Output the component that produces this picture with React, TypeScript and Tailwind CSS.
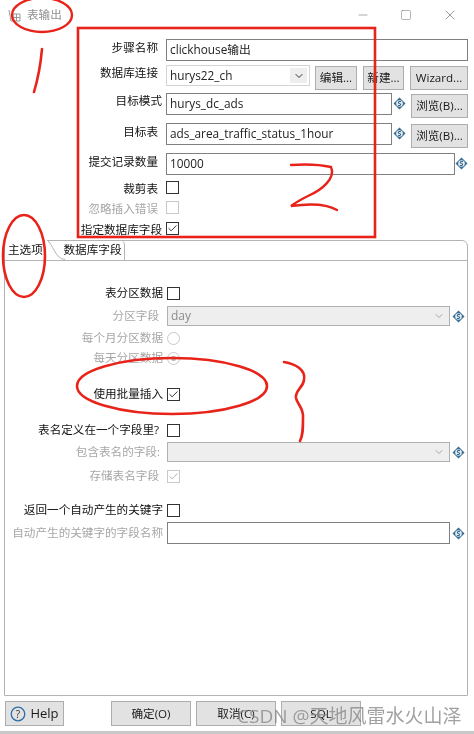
import { ReactNode } from "react";
import { ChevronDown, Minus, Square, X, Check } from "lucide-react";

function Dollar() {
  return (
    <svg width="13" height="13" viewBox="0 0 13 13" className="shrink-0">
      <path d="M6.5 0.5 L12.5 6.5 L6.5 12.5 L0.5 6.5 Z" fill="#3a6d93" />
      <circle cx="6.5" cy="6.5" r="3.3" fill="#e4ecf1" />
      <text x="6.5" y="9" textAnchor="middle" fontSize="7" fontWeight="700" fill="#2f6288">S</text>
    </svg>
  );
}

function CheckBox({ checked, disabled }: { checked?: boolean; disabled?: boolean }) {
  return (
    <span className={`w-[13px] h-[13px] shrink-0 border bg-white flex items-center justify-center ${disabled ? "border-[#c9c9c9]" : "border-[#333333]"}`}>
      {checked && <Check size={11} strokeWidth={2} className={disabled ? "text-[#a8a8a8]" : "text-[#222222]"} />}
    </span>
  );
}

function Radio({ dot }: { dot?: boolean }) {
  return (
    <span className="w-[13px] h-[13px] shrink-0 rounded-full border border-[#c9c9c9] bg-white flex items-center justify-center">
      {dot && <span className="w-[5px] h-[5px] rounded-full bg-[#b5b5b5]" />}
    </span>
  );
}

function Input({ value, className = "" }: { value?: string; className?: string }) {
  return (
    <div className={`h-[22px] border border-[#808080] bg-white px-[3px] flex items-center text-[#222222] text-[11.8px] whitespace-nowrap ${className}`}>
      {value}
    </div>
  );
}

function Btn({ children, className = "" }: { children: ReactNode; className?: string }) {
  return (
    <div className={`border border-[#adadad] bg-[#e2e2e2] flex items-center justify-center text-[#1a1a1a] text-[11.6px] whitespace-nowrap ${className}`}>
      {children}
    </div>
  );
}

function DisabledCombo({ value }: { value?: string }) {
  return (
    <div className="w-[283px] h-[20px] border border-[#b0b0b0] bg-[#eeeeee] pl-[3px] pr-[2px] flex items-center justify-between text-[#8c8c8c] text-[12px]">
      <span>{value}</span>
      <ChevronDown size={12} className="text-[#a8a8a8] mr-[2px]" />
    </div>
  );
}

function TopRow({ label, muted, children, className = "", labelClass = "pr-[5px]" }: { label: string; muted?: boolean; children: ReactNode; className?: string; labelClass?: string }) {
  return (
    <div className={`flex items-start ${className}`}>
      <span className={`w-[163px] shrink-0 text-right whitespace-nowrap leading-[16px] ${muted ? "text-[#a6a6a6]" : "text-[#111111]"} ${labelClass}`}>{label}</span>
      <div className="ml-[3px] flex items-start grow">{children}</div>
    </div>
  );
}

function PanelRow({ label, muted, children, top, labelClass = "" }: { label: string; muted?: boolean; children: ReactNode; top: string; labelClass?: string }) {
  return (
    <div className={`flex items-center ${top}`}>
      <span className={`w-[158px] shrink-0 text-right whitespace-nowrap ${muted ? "text-[#a6a6a6]" : "text-[#111111]"} ${labelClass}`}>{label}</span>
      <div className="ml-[4px] flex items-center gap-[1px]">{children}</div>
    </div>
  );
}

function Annotations() {
  return (
    <svg width="474" height="734" viewBox="0 0 474 734" fill="none" stroke="#e8231a" strokeLinecap="round" className="absolute left-0 top-0 pointer-events-none">
      <ellipse cx="42" cy="15" rx="30" ry="17" strokeWidth="2.4" />
      <path d="M42 49 C41 60 40 72 34 92" strokeWidth="2.6" />
      <rect x="78" y="28" width="297" height="209" strokeWidth="2.6" />
      <path d="M291 165 C305 164 322 165 331 167 C336 178 322 190 308 196 C300 200 295 203 291 206 C305 204 325 203 337 210" strokeWidth="2.4" />
      <ellipse cx="24" cy="256" rx="21" ry="41" strokeWidth="2.6" />
      <ellipse cx="172" cy="386" rx="95" ry="28" strokeWidth="2.6" />
      <path d="M284 362 C296 364 306 370 304 380 C303 388 295 390 296 398 C297 404 304 408 303 418 C303 428 303 436 300 441" strokeWidth="2.6" />
    </svg>
  );
}

export default function App() {
  return (
    <div className="relative w-[474px] h-[734px] overflow-hidden bg-white text-[11.6px] blur-[0.35px]" style={{ fontFamily: '"Open Sans", "Noto Sans CJK SC", sans-serif' }}>
      {/* title bar */}
      <div className="h-[30px] flex items-center pl-[8px] pr-[16px]">
        <svg width="13" height="13" viewBox="0 0 13 13" fill="none" stroke="#9a9a9a" strokeWidth="1" className="shrink-0">
          <path d="M1 1 L3 12 H12 V5 H5 V12 M5 8.5 H12 M8.5 5 V12" />
        </svg>
        <span className="ml-[6px] text-[#8f8f8f]">表输出</span>
        <div className="ml-auto flex items-center gap-[28px] text-[#6e6e6e]">
          <Minus size={14} strokeWidth={1} />
          <Square size={12} strokeWidth={1} className="mx-[2px]" />
          <X size={16} strokeWidth={1} />
        </div>
      </div>

      {/* general settings */}
      <div className="pt-[9px]">
        <TopRow label="步骤名称" labelClass="pr-[5px] pt-[1px]">
          <Input value="clickhouse输出" className="w-[302px]" />
        </TopRow>
        <TopRow label="数据库连接" className="mt-[4px]">
          <div className="w-[144px] h-[21px] border border-[#d4d4d4] bg-white pl-[3px] pr-[2px] flex items-center justify-between text-[11.8px] text-[#222222]">
            <span>hurys22_ch</span>
            <span className="w-[17px] h-[15px] bg-[#eeeeee] flex items-center justify-center">
              <ChevronDown size={12} className="text-[#333333]" />
            </span>
          </div>
          <Btn className="w-[42px] h-[24px] ml-[5px] mt-[1px]">编辑...</Btn>
          <Btn className="w-[41px] h-[24px] ml-[6px] mt-[1px]">新建...</Btn>
          <Btn className="w-[58px] h-[24px] ml-[6px] mt-[1px]">Wizard...</Btn>
        </TopRow>
        <TopRow label="目标模式" className="mt-[3px]" labelClass="pr-[1px]">
          <Input value="hurys_dc_ads" className="w-[226px]" />
          <span className="ml-[1px] mt-[4px]"><Dollar /></span>
          <Btn className="w-[57px] h-[24px] ml-[5px] mt-[1px]">浏览(B)...</Btn>
        </TopRow>
        <TopRow label="目标表" className="mt-[5px]" labelClass="pr-[5px] pt-[1px]">
          <Input value="ads_area_traffic_status_1hour" className="w-[226px]" />
          <span className="ml-[1px] mt-[4px]"><Dollar /></span>
          <Btn className="w-[57px] h-[24px] ml-[5px] mt-[1px]">浏览(B)...</Btn>
        </TopRow>
        <TopRow label="提交记录数量" className="mt-[5px]" labelClass="pr-[5px] pt-[1px]">
          <Input value="10000" className="w-[289px]" />
          <span className="mt-[4px]"><Dollar /></span>
        </TopRow>
        <TopRow label="裁剪表" className="mt-[6px]">
          <CheckBox />
        </TopRow>
        <TopRow label="忽略插入错误" muted className="mt-[4px]">
          <CheckBox disabled />
        </TopRow>
        <TopRow label="指定数据库字段" className="mt-[5px]" labelClass="pr-[1px]">
          <CheckBox checked />
        </TopRow>
      </div>

      {/* tabs */}
      <div className="absolute left-[4px] top-[240px] w-[464px] h-[456px] border border-[#b4b4b4] rounded-t-[6px] bg-white">
        <div className="h-[20px] border-b border-[#b4b4b4] flex items-end">
          <div className="w-[42px] h-[20px] pl-[3px] flex items-center text-[#111111] bg-white">主选项</div>
          <svg width="18" height="20" viewBox="0 0 18 20" fill="none" stroke="#b4b4b4" className="-mr-[4px]">
            <path d="M0 0 C6 4 8 19 18 19.5" />
          </svg>
          <div className="h-[20px] w-[64px] border-r border-[#b4b4b4] rounded-tr-[5px] flex items-center justify-center text-[#111111]">数据库字段</div>
        </div>

        {/* main options panel */}
        <div className="flex flex-col">
          <PanelRow label="表分区数据" top="mt-[25px] h-[14px]">
            <CheckBox />
          </PanelRow>
          <PanelRow label="分区字段" muted top="mt-[6px] h-[20px]" labelClass="pr-[4px]">
            <DisabledCombo value="day" />
            <span className="ml-[1px]"><Dollar /></span>
          </PanelRow>
          <PanelRow label="每个月分区数据" muted top="mt-[4px] h-[16px]">
            <Radio />
          </PanelRow>
          <PanelRow label="每天分区数据" muted top="mt-[4px] h-[16px]">
            <Radio dot />
          </PanelRow>
          <PanelRow label="使用批量插入" top="mt-[20px] h-[16px]">
            <CheckBox checked />
          </PanelRow>
          <PanelRow label="表名定义在一个字段里?" top="mt-[20px] h-[16px]" labelClass="pr-[4px]">
            <CheckBox />
          </PanelRow>
          <PanelRow label="包含表名的字段:" muted top="mt-[4px] h-[20px]" labelClass="pr-[3px]">
            <DisabledCombo />
            <span className="ml-[1px]"><Dollar /></span>
          </PanelRow>
          <PanelRow label="存储表名字段" muted top="mt-[6px] h-[16px]" labelClass="pr-[4px]">
            <CheckBox checked disabled />
          </PanelRow>
          <PanelRow label="返回一个自动产生的关键字" top="mt-[18px] h-[16px]">
            <CheckBox />
          </PanelRow>
          <PanelRow label="自动产生的关键字的字段名称" muted top="mt-[4px] h-[22px]">
            <div className="w-[283px] h-[22px] border border-[#808080] bg-white" />
            <span className="ml-[1px]"><Dollar /></span>
          </PanelRow>
        </div>
      </div>

      {/* footer buttons */}
      <div className="absolute left-[5px] right-0 top-[701px] h-[25px] flex items-stretch">
        <Btn className="w-[59px] gap-[4px] text-[13px]">
          <svg width="16" height="16" viewBox="0 0 16 16" fill="none">
            <circle cx="8" cy="8" r="6.8" stroke="#2f6fa8" strokeWidth="1.3" />
            <text x="8" y="11.5" textAnchor="middle" fontSize="10" fill="#333333">?</text>
          </svg>
          Help
        </Btn>
        <Btn className="w-[80px] ml-[47px]">确定(O)</Btn>
        <Btn className="w-[80px] ml-[5px]">取消(C)</Btn>
        <Btn className="w-[80px] ml-[5px]">SQL</Btn>
      </div>
      <div className="absolute left-0 right-0 bottom-0 h-[3px] bg-[#c8c8c8]" />

      {/* watermark */}
      <div className="absolute left-[237px] top-[702px] text-[19px] leading-[28px] text-[#8a8a8a]/80 whitespace-nowrap">CSDN @天地风雷水火山泽</div>

      <Annotations />
    </div>
  );
}
